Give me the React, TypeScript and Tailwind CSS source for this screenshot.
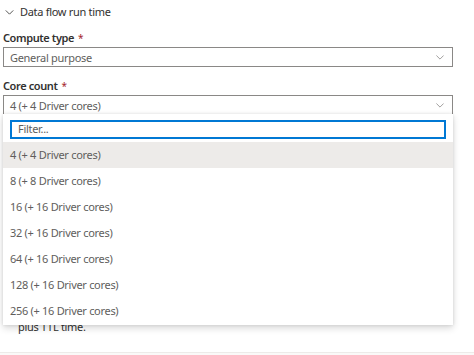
import React from 'react';

const OPTIONS: string[] = [
  '4 (+ 4 Driver cores)',
  '8 (+ 8 Driver cores)',
  '16 (+ 16 Driver cores)',
  '32 (+ 16 Driver cores)',
  '64 (+ 16 Driver cores)',
  '128 (+ 16 Driver cores)',
  '256 (+ 16 Driver cores)',
];

const Chevron: React.FC<{ className?: string }> = ({ className }) => (
  <svg viewBox="0 0 10 6" className={className} fill="none" stroke="currentColor" strokeWidth="1">
    <path d="M0.5 0.5 L5 5 L9.5 0.5" />
  </svg>
);

const SelectBox: React.FC<{ value: string }> = ({ value }) => (
  <div className="flex h-[20px] w-[450px] items-center justify-between border border-[#8a8886] pl-[6px] pr-[8px]">
    <span className="text-[11px] leading-none tracking-[-0.3px] text-[#605e5c]">{value}</span>
    <Chevron className="h-[5px] w-[8px] text-[#8a8886]" />
  </div>
);

const Label: React.FC<{ text: string }> = ({ text }) => (
  <div className="flex h-[16px] items-center text-[11px] font-semibold tracking-[-0.4px] text-[#323130]">
    {text}
    <span className="ml-[4px] text-[10px] font-normal text-[#a4262c]">*</span>
  </div>
);

export default function App() {
  return (
    <div
      className="relative h-[355px] w-[474px] overflow-hidden bg-white"
      style={{ fontFamily: '"Noto Sans", "Open Sans", sans-serif' }}
    >
      <div className="flex h-[24px] items-center gap-[6px] pl-[5px]">
        <Chevron className="h-[5px] w-[9px] text-[#323130]" />
        <span className="text-[11px] tracking-[-0.3px] text-[#323130]">Data flow run time</span>
      </div>

      <div className="px-[3px]">
        <div className="mt-[6px]">
          <Label text="Compute type" />
        </div>
        <div className="mt-[1px]">
          <SelectBox value="General purpose" />
        </div>
        <div className="mt-[11px]">
          <Label text="Core count" />
        </div>
        <div className="mt-[1px]">
          <SelectBox value="4 (+ 4 Driver cores)" />
        </div>
        <div className="mt-[12px] pl-[15px] pt-[190px] text-[11px] leading-[19px] tracking-[-0.3px] text-[#323130]">
          <p>plus TTL time.</p>
        </div>
      </div>

      <div className="absolute bottom-0 left-0 h-[3px] w-[474px] border-t border-[#edebe9] bg-[#faf9f8]" />

      <div className="absolute left-[3px] top-[114px] w-[450px] bg-white shadow-[0_3px_7px_rgba(0,0,0,0.16),0_0_3px_rgba(0,0,0,0.1)]">
        <div className="px-[7px] pt-[6px] pb-[3px]">
          <div className="flex h-[19px] items-center border-2 border-[#0078d4] pl-[6px] text-[11px] tracking-[-0.3px] text-[#605e5c]">
            Filter...
          </div>
        </div>
        {OPTIONS.map((opt, idx) => (
          <div
            key={opt}
            className={`flex h-[26px] items-center pl-[7px] text-[11px] tracking-[-0.3px] text-[#605e5c] ${
              idx === 0 ? 'bg-[#edebe9]' : ''
            }`}
          >
            {opt}
          </div>
        ))}
        <div className="h-[1px]" />
      </div>
    </div>
  );
}
